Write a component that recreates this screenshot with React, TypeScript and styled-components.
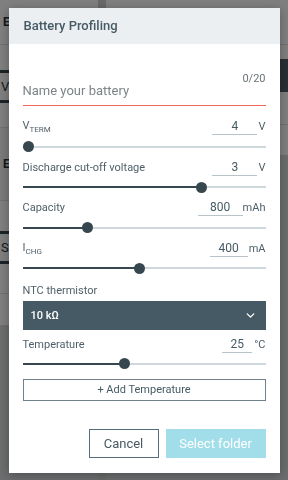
import React from 'react';
import styled, { createGlobalStyle } from 'styled-components';
import { ChevronDown } from 'lucide-react';

const GlobalStyle = createGlobalStyle`
  html, body {
    margin: 0;
    padding: 0;
    width: 288px;
    height: 480px;
    overflow: hidden;
  }

  body {
    font-family: Roboto, 'Liberation Sans', sans-serif;
  }

  * {
    box-sizing: border-box;
  }
`;

/* ---------- app behind the dialog ---------- */

const Shell = styled.div`
  display: flex;
  width: 288px;
  height: 480px;
  background: #d6dadc;
`;

const Sidebar = styled.div`
  display: flex;
  flex-direction: column;
  width: 98px;
  height: 325px;
  background: #fff;
`;

const Divider = styled.div`
  width: 8px;
  background: #d2d2d2;
`;

const Main = styled.div`
  display: flex;
  flex: 1;
  flex-direction: column;
  height: 155px;
  background: #fff;
`;

const SideHead = styled.div<{ $height: number; $shade?: boolean }>`
  display: flex;
  align-items: center;
  height: ${({ $height }) => $height}px;
  padding-left: 3px;
  border-bottom: 1px solid #e2e2e2;
  background: ${({ $shade }) => ($shade ? '#f4f4f4' : '#fff')};
  font-size: 12px;
  font-weight: 700;
  color: #263238;
`;

const SideBlock = styled.div<{ $height: number }>`
  display: flex;
  flex-direction: column;
  justify-content: center;
  height: ${({ $height }) => $height}px;
  border-bottom: 1px solid #e2e2e2;
`;

const SideSelect = styled.div`
  display: flex;
  align-items: center;
  height: 33px;
  padding-left: 1px;
  border-top: 3px solid #37474f;
  border-bottom: 3px solid #37474f;
  font-size: 13px;
  color: #263238;
`;

const MainBand = styled.div<{ $height: number; $dark?: boolean; $line?: boolean }>`
  height: ${({ $height }) => $height}px;
  background: ${({ $dark }) => ($dark ? '#4f5f66' : '#fff')};
  border-bottom: ${({ $line }) => ($line ? '1px solid #e2e2e2' : 'none')};
`;

/* ---------- dialog ---------- */

const Overlay = styled.div`
  position: fixed;
  inset: 0;
  display: flex;
  align-items: center;
  justify-content: center;
  background: rgba(0, 0, 0, 0.5);
`;

const Modal = styled.div`
  display: flex;
  flex-direction: column;
  width: 271px;
  height: 465px;
  background: #fff;
  box-shadow: 0 2px 10px rgba(0, 0, 0, 0.3);
`;

const Header = styled.div`
  display: flex;
  align-items: center;
  height: 36px;
  padding: 0 15px;
  background: #eceff1;
  font-size: 13px;
  font-weight: 500;
  color: #455a64;
`;

const Body = styled.div`
  display: flex;
  flex: 1;
  flex-direction: column;
  padding: 0 14px 15px;
`;

const Counter = styled.div`
  margin-top: 28px;
  font-size: 11px;
  line-height: 13px;
  text-align: right;
  color: #6b7478;
`;

const NameInput = styled.input`
  display: block;
  width: 100%;
  height: 21px;
  padding: 0 0 9px;
  border: none;
  border-bottom: 1px solid #f4665a;
  outline: none;
  font-family: inherit;
  font-size: 13px;
  color: #37474f;
  background: transparent;

  &::placeholder {
    color: #7d8487;
  }
`;

const Params = styled.div`
  display: flex;
  flex-direction: column;
  gap: 0.5px;
  margin-top: 11px;
`;

const ParamHead = styled.div`
  display: flex;
  align-items: center;
  height: 20px;
`;

const Label = styled.span`
  flex: 1;
  font-size: 11px;
  color: #4f5f68;

  sub {
    font-size: 8px;
    vertical-align: -3px;
  }
`;

const ValueInput = styled.input<{ $width: number }>`
  width: ${({ $width }) => $width}px;
  height: 17px;
  padding: 0;
  border: none;
  border-bottom: 1px solid #b8c4ca;
  outline: none;
  font-family: inherit;
  font-size: 12px;
  text-align: center;
  color: #455a64;
  background: transparent;
`;

const Unit = styled.span<{ $gap: number }>`
  margin-left: ${({ $gap }) => $gap}px;
  font-size: 11px;
  color: #4f5f68;
`;

const SliderRow = styled.div<{ $height?: number }>`
  position: relative;
  display: flex;
  align-items: center;
  height: ${({ $height }) => $height ?? 20}px;
`;

const Track = styled.div`
  position: relative;
  width: 100%;
  height: 2px;
  background: #cfd8dc;
`;

const Fill = styled.div`
  position: absolute;
  left: 0;
  top: 0;
  height: 2px;
  background: #37474f;
`;

const Thumb = styled.div`
  position: absolute;
  top: 50%;
  width: 11px;
  height: 11px;
  margin: -5.5px 0 0 -5.5px;
  border-radius: 50%;
  background: #37474f;
`;

const SectionLabel = styled.div`
  display: flex;
  align-items: center;
  height: 20px;
  margin-top: 2.5px;
  font-size: 11px;
  color: #4f5f68;
`;

const Select = styled.div`
  display: flex;
  align-items: center;
  justify-content: space-between;
  height: 29px;
  padding: 0 9px 0 8px;
  background: #455a64;
  font-size: 11px;
  font-weight: 500;
  color: #fff;
`;

const TempHead = styled(ParamHead)`
  margin-top: 5px;
`;

const OutlineButton = styled.button`
  height: 22px;
  margin-top: 6px;
  border: 1px solid #6f828b;
  background: #fff;
  font-family: inherit;
  font-size: 11px;
  color: #455a64;
`;

const Footer = styled.div`
  display: flex;
  justify-content: flex-end;
  gap: 7px;
  margin-top: auto;
`;

const FooterButton = styled.button<{ $primary?: boolean; $width: number }>`
  width: ${({ $width }) => $width}px;
  height: 29px;
  border: ${({ $primary }) => ($primary ? 'none' : '1px solid #546e7a')};
  background: ${({ $primary }) => ($primary ? '#a2deea' : '#fff')};
  font-family: inherit;
  font-size: 13px;
  color: ${({ $primary }) => ($primary ? '#fff' : '#455a64')};
`;

function Slider ({ ratio, height }: { ratio: number; height?: number }) {
  const pos = `calc(5.5px + (100% - 11px) * ${ratio})`;

  return (
    <SliderRow $height={height}>
      <Track>
        <Fill style={{ width: pos }} />
        <Thumb style={{ left: pos }} />
      </Track>
    </SliderRow>
  );
}

interface ParamProps {
  label: React.ReactNode;
  value: string;
  unit: string;
  width: number;
  gap: number;
  ratio: number;
}

function Param ({ label, value, unit, width, gap, ratio }: ParamProps) {
  return (
    <div>
      <ParamHead>
        <Label>{label}</Label>
        <ValueInput $width={width} defaultValue={value} />
        <Unit $gap={gap}>{unit}</Unit>
      </ParamHead>
      <Slider ratio={ratio} />
    </div>
  );
}

export default function App () {
  return (
    <>
      <GlobalStyle />
      <Shell>
        <Sidebar>
          <SideHead $height={45}>E</SideHead>
          <SideBlock $height={83}>
            <SideSelect>V</SideSelect>
          </SideBlock>
          <SideHead $height={73} $shade>E</SideHead>
          <SideBlock $height={93}>
            <SideSelect>Sw</SideSelect>
          </SideBlock>
        </Sidebar>
        <Divider />
        <Main>
          <MainBand $height={45} $line />
          <MainBand $height={14} />
          <MainBand $height={33} $dark />
          <MainBand $height={33} $line />
          <MainBand $height={30} />
        </Main>
      </Shell>

      <Overlay>
        <Modal>
          <Header>Battery Profiling</Header>
          <Body>
            <Counter>0/20</Counter>
            <NameInput placeholder='Name your battery' />

            <Params>
              <Param
                gap={1}
                label={<>V<sub>TERM</sub></>}
                ratio={0}
                unit='V'
                value='4'
                width={45}
              />
              <Param
                gap={1}
                label='Discharge cut-off voltage'
                ratio={0.748}
                unit='V'
                value='3'
                width={45}
              />
              <Param
                gap={0}
                label='Capacity'
                ratio={0.256}
                unit='mAh'
                value='800'
                width={45}
              />
              <Param
                gap={1}
                label={<>I<sub>CHG</sub></>}
                ratio={0.48}
                unit='mA'
                value='400'
                width={38}
              />
            </Params>

            <SectionLabel>NTC thermistor</SectionLabel>
            <Select>
              <span>10 kΩ</span>
              <ChevronDown size={13} strokeWidth={2.5} />
            </Select>

            <TempHead>
              <Label>Temperature</Label>
              <ValueInput $width={30} defaultValue='25' />
              <Unit $gap={2}>°C</Unit>
            </TempHead>
            <Slider height={18} ratio={0.416} />

            <OutlineButton>+ Add Temperature</OutlineButton>

            <Footer>
              <FooterButton $width={70}>Cancel</FooterButton>
              <FooterButton $primary $width={100}>Select folder</FooterButton>
            </Footer>
          </Body>
        </Modal>
      </Overlay>
    </>
  );
}
